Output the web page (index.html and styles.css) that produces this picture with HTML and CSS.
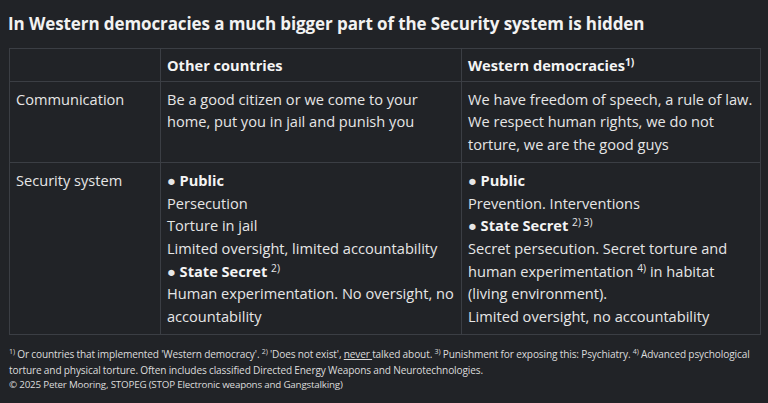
FILE: index.html
```html
<!DOCTYPE html>
<html>
<head>
<meta charset="utf-8">
<link rel="stylesheet" href="styles.css">
</head>
<body>
<h1 class="title">In Western democracies a much bigger part of the Security system is hidden</h1>
<table class="grid">
  <tr class="head">
    <td class="c1"></td>
    <td class="c2"><b>Other countries</b></td>
    <td class="c3"><b>Western democracies<sup>1)</sup></b></td>
  </tr>
  <tr>
    <td class="c1">Communication</td>
    <td class="c2">Be a good citizen or we come to your home, put you in jail and punish you</td>
    <td class="c3">We have freedom of speech, a rule of law. We respect human rights, we do not torture, we are the good guys</td>
  </tr>
  <tr>
    <td class="c1">Security system</td>
    <td class="c2">● <b>Public</b><br>Persecution<br>Torture in jail<br>Limited oversight, limited accountability<br>● <b>State Secret</b> <sup>2)</sup><br>Human experimentation. No oversight, no accountability</td>
    <td class="c3">● <b>Public</b><br>Prevention. Interventions<br>● <b>State Secret</b> <sup>2) 3)</sup><br>Secret persecution. Secret torture and human experimentation <sup>4)</sup> in habitat (living environment).<br>Limited oversight, no accountability</td>
  </tr>
</table>
<div class="notes">
  <p class="fn"><sup>1)</sup> Or countries that implemented 'Western democracy'. <sup>2)</sup> 'Does not exist', <u>never </u>talked about. <sup>3)</sup> Punishment for exposing this: Psychiatry. <sup>4)</sup> Advanced psychological torture and physical torture. Often includes classified Directed Energy Weapons and Neurotechnologies.</p>
  <p class="copy">© 2025 Peter Mooring, STOPEG (STOP Electronic weapons and Gangstalking)</p>
</div>
</body>
</html>
```

FILE: styles.css
```css
html, body {
  margin: 0;
  padding: 0;
  background: #212327;
  color: #e6e6e6;
  font-family: "Open Sans", "Noto Sans", sans-serif;
}
body {
  padding: 0 8px 0 9px;
}
.title {
  margin: 0;
  padding-top: 12px;
  height: 36px;
  box-sizing: border-box;
  font-size: 17px;
  font-weight: 700;
  line-height: 24px;
  color: #f2f2f2;
  letter-spacing: -0.1px;
  margin-left: -1px;
}
.grid {
  border-collapse: collapse;
  width: 752px;
  margin-top: 12px;
  font-size: 14.6px;
  line-height: 22.7px;
}
.grid td {
  border: 1px solid #3b3e44;
  vertical-align: top;
  padding: 6px 6px 6px 6px;
}
.grid .c1 { width: 138px; }
.grid .c2 { width: 288px; }
.grid .head td {
  padding-top: 5px;
  padding-bottom: 4px;
  height: 22px;
}
.grid b { font-weight: 700; color: #f4f4f4; }
sup {
  font-size: 0.7em;
  line-height: 0;
  vertical-align: 0.5em;
}
.notes {
  margin-top: 11px;
}
.fn {
  margin: 0;
  font-size: 10.1px;
  letter-spacing: -0.12px;
  word-spacing: -0.2px;
  line-height: 16px;
  color: #dcdcdc;
}
.copy {
  margin: 0;
  font-size: 9.8px;
  letter-spacing: -0.2px;
  line-height: 14px;
  color: #dcdcdc;
}
```
